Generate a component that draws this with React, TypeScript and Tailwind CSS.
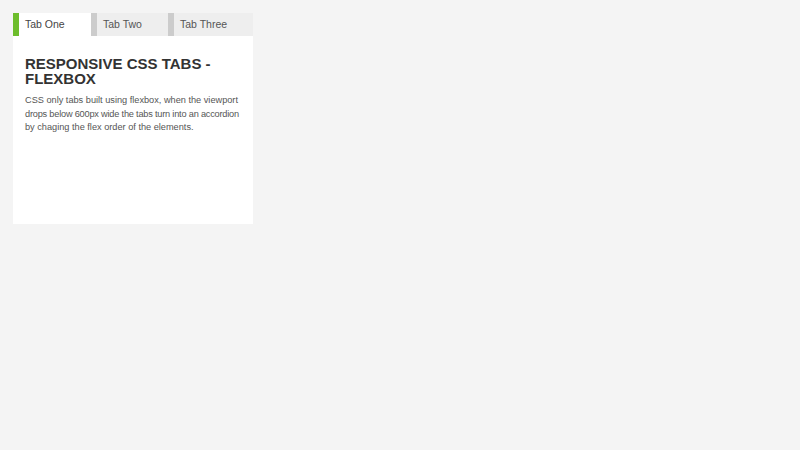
import React from "react";

export default function App() {
  const font = { fontFamily: '"Liberation Sans", Arial, sans-serif' };
  return (
    <div className="min-h-screen w-full bg-[#f4f4f4] p-[13px]" style={font}>
      <div className="w-[240px]">
        <div className="flex h-[23px]">
          <div className="w-[78px] flex items-center border-l-[6px] border-[#6dbd2c] bg-white pl-[6px] text-[10.5px] text-[#444]">
            Tab One
          </div>
          <div className="w-[77px] flex items-center border-l-[6px] border-[#cccccc] bg-[#eeeeee] pl-[6px] text-[10.5px] text-[#555]">
            Tab Two
          </div>
          <div className="flex-1 flex items-center border-l-[6px] border-[#cccccc] bg-[#eeeeee] pl-[6px] text-[10.5px] text-[#555]">
            Tab Three
          </div>
        </div>
        <div className="h-[188px] bg-white px-[12px] pt-[20px]">
          <h1 className="text-[15px] leading-[15px] font-bold text-[#333] uppercase">
            Responsive CSS Tabs - Flexbox
          </h1>
          <p className="mt-[8px] text-[9.2px] leading-[13.5px] text-[#555] whitespace-nowrap">
            <span className="block">CSS only tabs built using flexbox, when the viewport</span>
            <span className="block tracking-[-0.2px]">drops below 600px wide the tabs turn into an accordion</span>
            <span className="block">by chaging the flex order of the elements.</span>
          </p>
        </div>
      </div>
    </div>
  );
}
